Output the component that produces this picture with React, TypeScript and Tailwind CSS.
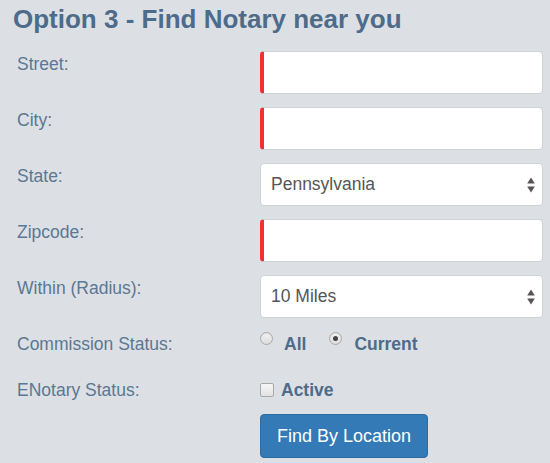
import React from "react";

const labelCls = "text-[17.5px] leading-[20px] text-[#5b7793] pt-[3px]";

const RedInput = () => (
  <div className="h-[43px] rounded-[4px] bg-white border border-[#cfd3d7] border-l-[4px] border-l-[#f2302f]" />
);

const Select = ({ value }: { value: string }) => (
  <div className="h-[43px] rounded-[4px] bg-white border border-[#cfd3d7] flex items-center justify-between pl-[10px] pr-[7px]">
    <span className="text-[17.5px] text-[#555]">{value}</span>
    <svg width="8" height="16" viewBox="0 0 8 16">
      <path d="M4 0.5 L7.8 6.5 L0.2 6.5 Z" fill="#555" />
      <path d="M4 15.5 L7.8 9.5 L0.2 9.5 Z" fill="#555" />
    </svg>
  </div>
);

const Radio = ({ checked }: { checked?: boolean }) => (
  <span className="w-[13px] h-[13px] rounded-full border border-[#a9a9a9] bg-gradient-to-b from-[#f4f4f4] to-[#dcdcdc] shadow-[inset_0_1px_1px_rgba(0,0,0,0.08)] flex items-center justify-center">
    {checked && <span className="w-[5px] h-[5px] rounded-full bg-[#444]" />}
  </span>
);

export default function App() {
  return (
    <div
      className="w-[550px] h-[463px] bg-[#dce0e4] overflow-hidden"
      style={{ fontFamily: '"Liberation Sans", Arial, sans-serif' }}
    >
      <h2 className="text-[26px] font-bold text-[#4d6b8a] pl-[13px] pt-[4px] leading-[30px]">
        Option 3 - Find Notary near you
      </h2>
      <div className="grid grid-cols-[243px_283px] pl-[17px] mt-[17px] gap-y-[13px]">
        <div className={labelCls}>Street:</div>
        <RedInput />
        <div className={labelCls}>City:</div>
        <RedInput />
        <div className={labelCls}>State:</div>
        <Select value="Pennsylvania" />
        <div className={labelCls}>Zipcode:</div>
        <RedInput />
        <div className={labelCls}>Within (Radius):</div>
        <Select value="10 Miles" />
      </div>
      <div className="grid grid-cols-[243px_283px] pl-[17px] mt-[15px]">
        <div className="text-[17.5px] leading-[22px] text-[#5b7793]">Commission Status:</div>
        <div className="flex items-center h-[22px]">
          <span className="self-start mt-[-1px]"><Radio /></span>
          <span className="ml-[11px] text-[17.5px] font-bold text-[#4d6b8a]">All</span>
          <span className="self-start mt-[-1px] ml-[23px]"><Radio checked /></span>
          <span className="ml-[12px] text-[17.5px] font-bold text-[#4d6b8a]">Current</span>
        </div>
        <div className="text-[17.5px] leading-[22px] text-[#5b7793] mt-[24px]">ENotary Status:</div>
        <div className="flex items-center mt-[24px] h-[22px]">
          <span className="w-[14px] h-[14px] rounded-[2px] border border-[#a9a9a9] bg-gradient-to-b from-[#f7f7f7] to-[#e2e2e2]" />
          <span className="ml-[7px] text-[17.5px] font-bold text-[#4d6b8a]">Active</span>
        </div>
        <div />
        <div className="mt-[13px]">
          <button className="h-[44px] w-[168px] rounded-[4px] bg-[#337ab7] border border-[#2e6da4] text-white text-[18px]">
            Find By Location
          </button>
        </div>
      </div>
    </div>
  );
}
